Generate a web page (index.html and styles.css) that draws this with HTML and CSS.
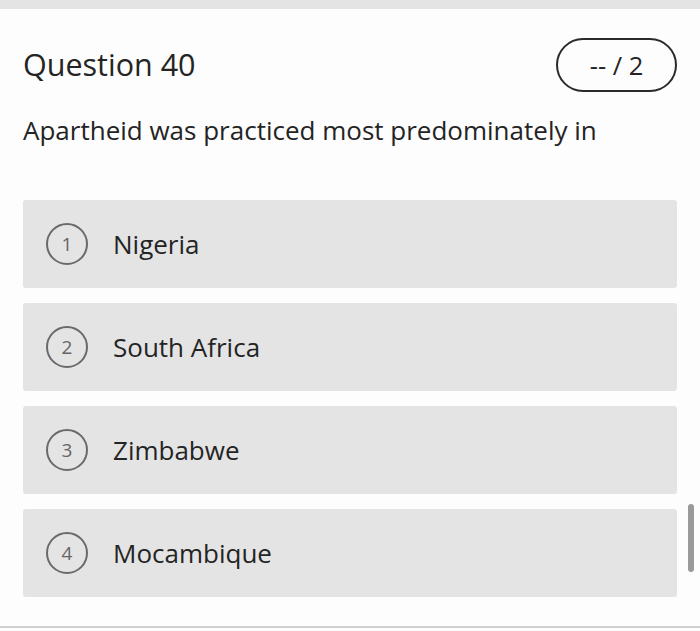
FILE: index.html
```html
<!DOCTYPE html>
<html>
<head>
<meta charset="utf-8">
<link rel="stylesheet" href="styles.css">
</head>
<body>
<div class="topband"></div>
<main class="quiz">
  <div class="header">
    <h1 class="title">Question 40</h1>
    <div class="score">-- / 2</div>
  </div>
  <p class="prompt">Apartheid was practiced most predominately in</p>
  <ul class="options">
    <li class="option"><span class="num">1</span><span class="label">Nigeria</span></li>
    <li class="option"><span class="num">2</span><span class="label">South Africa</span></li>
    <li class="option"><span class="num">3</span><span class="label">Zimbabwe</span></li>
    <li class="option"><span class="num">4</span><span class="label">Mocambique</span></li>
  </ul>
</main>
<div class="bottomline"></div>
<div class="scrollbar"></div>
</body>
</html>
```
FILE: styles.css
```css
html, body {
  margin: 0;
  padding: 0;
  background: #fdfdfd;
  height: 631px;
  overflow: hidden;
}
body {
  font-family: "Open Sans", "Liberation Sans", sans-serif;
  color: #242424;
  position: relative;
}
.topband {
  height: 9px;
  background: #e4e4e4;
}
.quiz {
  padding: 0 23px;
}
.header {
  display: flex;
  justify-content: space-between;
  align-items: center;
  margin-top: 29px;
  height: 54px;
}
.title {
  margin: 0;
  font-size: 30.5px;
  font-weight: 500;
  line-height: 40px;
  margin-top: -2px;
}
.score {
  box-sizing: border-box;
  width: 121px;
  height: 54px;
  border: 2px solid #2a2a2a;
  border-radius: 27px;
  display: flex;
  align-items: center;
  justify-content: center;
  font-size: 25.5px;
}
.prompt {
  margin: 19px 0 0;
  font-size: 26px;
  line-height: 38px;
}
.options {
  list-style: none;
  margin: 51px 0 0;
  padding: 0;
  display: flex;
  flex-direction: column;
  gap: 15px;
}
.option {
  height: 88px;
  background: #e4e4e4;
  border-radius: 3px;
  display: flex;
  align-items: center;
  padding-left: 23px;
}
.num {
  box-sizing: border-box;
  width: 42px;
  height: 42px;
  border: 2px solid #6a6a6a;
  border-radius: 50%;
  display: flex;
  align-items: center;
  justify-content: center;
  font-size: 19px;
  color: #666;
}
.label {
  margin-left: 25px;
  font-size: 26px;
}
.bottomline {
  position: absolute;
  left: 0;
  right: 0;
  top: 626px;
  height: 2px;
  background: #cfcfcf;
}
.scrollbar {
  position: absolute;
  left: 688px;
  top: 504px;
  width: 6px;
  height: 68px;
  border-radius: 3px;
  background: #9a9a9a;
}
```
